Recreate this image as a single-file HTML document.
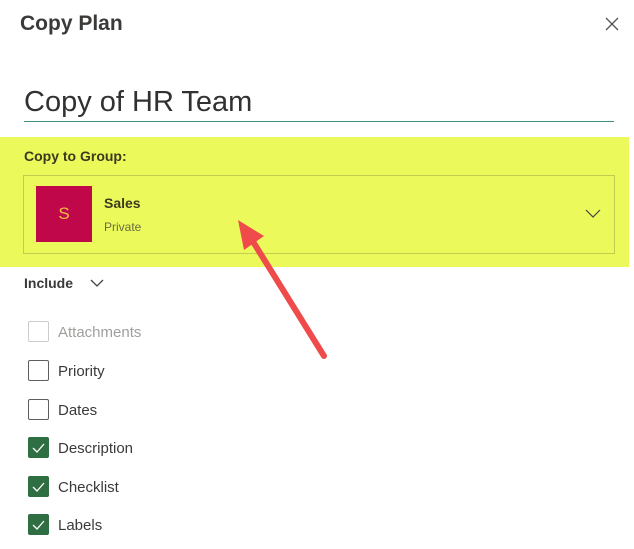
<!DOCTYPE html>
<html><head><style>
body{margin:0;width:634px;height:549px;background:#fff;font-family:"Liberation Sans",sans-serif;position:relative;overflow:hidden;color:#323130}
.a{position:absolute}
.cb{position:absolute;left:28px;width:19px;height:19px;border:1px solid #605e5c;border-radius:2px;background:#fff}
.cb.on{background:#2e6e42;border-color:#2e6e42}
.lb{position:absolute;left:58px;font-size:15px;color:#3b3a39}
</style></head><body>
<div class="a" style="left:20px;top:12px;font-size:21px;font-weight:bold;color:#3b3a39">Copy Plan</div>
<svg class="a" style="left:604px;top:16px" width="16" height="16"><path d="M2 2L14 14M14 2L2 14" stroke="#555" stroke-width="1.3"/></svg>
<div class="a" style="left:24px;top:86px;font-size:29px;color:#323130">Copy of HR Team</div>
<div class="a" style="left:24px;top:121px;width:590px;height:1px;background:#3f8f7c"></div>
<div class="a" style="left:0;top:137px;width:629px;height:130px;background:#ebfa5a"></div>
<div class="a" style="left:24px;top:148px;font-size:14px;font-weight:bold;color:#3b3a20">Copy to Group:</div>
<div class="a" style="left:23px;top:175px;width:590px;height:77px;border:1px solid #c3cc50"></div>
<div class="a" style="left:36px;top:186px;width:56px;height:56px;background:#c0074a;color:#f0c040;font-size:17px;text-align:center;line-height:56px">S</div>
<div class="a" style="left:104px;top:195px;font-size:14px;font-weight:bold;color:#3b3a20">Sales</div>
<div class="a" style="left:104px;top:220px;font-size:12px;color:#6b6b40">Private</div>
<svg class="a" style="left:585px;top:209px" width="16" height="10"><path d="M1 1L8 8L15 1" fill="none" stroke="#444" stroke-width="1.2"/></svg>
<div class="a" style="left:24px;top:275px;font-size:14px;font-weight:bold;color:#3b3a39">Include</div>
<svg class="a" style="left:90px;top:279px" width="14" height="9"><path d="M1 1L7 7L13 1" fill="none" stroke="#444" stroke-width="1.3"/></svg>
<div class="cb" style="top:321px;border-color:#ccc"></div><div class="lb" style="top:324px;color:#a19f9d">Attachments</div>
<div class="cb" style="top:360px"></div><div class="lb" style="top:363px">Priority</div>
<div class="cb" style="top:399px"></div><div class="lb" style="top:402px">Dates</div>
<div class="cb on" style="top:437px"></div><div class="lb" style="top:440px">Description</div>
<div class="cb on" style="top:476px"></div><div class="lb" style="top:479px">Checklist</div>
<div class="cb on" style="top:514px"></div><div class="lb" style="top:517px">Labels</div>
<svg class="a" style="left:28px;top:437px" width="21" height="100"><g fill="none" stroke="#fff" stroke-width="1.3"><path d="M5 11L9 15L16 7"/><path d="M5 50L9 54L16 46"/><path d="M5 88L9 92L16 84"/></g></svg>
<svg class="a" style="left:0;top:0" width="634" height="549"><line x1="324" y1="356" x2="252" y2="240" stroke="#ef4b4b" stroke-width="6" stroke-linecap="round"/><polygon points="238,220 264,236 244,250" fill="#ef4b4b"/></svg>
</body></html>
